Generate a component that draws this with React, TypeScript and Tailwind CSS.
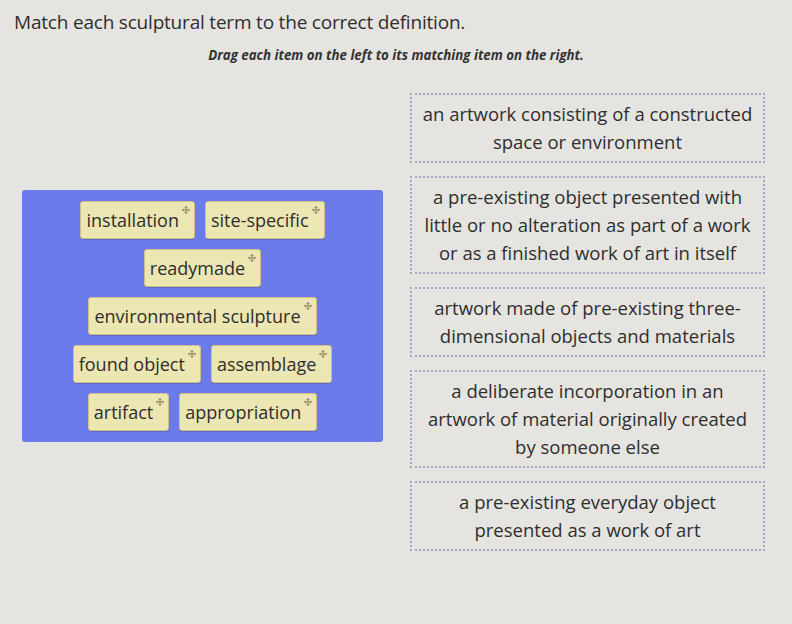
import { Move } from "lucide-react";

const terms: string[][] = [
  ["installation", "site-specific"],
  ["readymade"],
  ["environmental sculpture"],
  ["found object", "assemblage"],
  ["artifact", "appropriation"],
];

const definitions: string[][] = [
  ["an artwork consisting of a constructed", "space or environment"],
  [
    "a pre-existing object presented with",
    "little or no alteration as part of a work",
    "or as a finished work of art in itself",
  ],
  ["artwork made of pre-existing three-", "dimensional objects and materials"],
  [
    "a deliberate incorporation in an",
    "artwork of material originally created",
    "by someone else",
  ],
  ["a pre-existing everyday object", "presented as a work of art"],
];

function Chip({ label }: { label: string }) {
  return (
    <div className="flex items-start h-[38px] pl-[5px] pr-[4px] bg-[#ece6b2] border border-[#d2bd85] rounded-[3px] shadow-[0_1px_1px_rgba(0,0,0,0.15)]">
      <span className="self-center text-[18px] leading-none text-[#2e2e2e]">{label}</span>
      <Move size={8} strokeWidth={2.5} className="ml-[3px] mt-[4px] text-[#7f7055]" />
    </div>
  );
}

export default function App() {
  return (
    <div className="w-[792px] h-[624px] bg-[#e5e4e0] font-['Open_Sans',sans-serif] text-[#2e2e2e] overflow-hidden">
      <h1 className="pl-[14px] pt-[10px] text-[19px] leading-[24px] tracking-[-0.2px]">
        Match each sculptural term to the correct definition.
      </h1>
      <p className="mt-[12px] text-center text-[13.3px] leading-[18px] font-bold italic text-[#333]">
        Drag each item on the left to its matching item on the right.
      </p>

      <div className="flex items-start mt-[29px] pl-[22px]">
        <div className="mt-[97px] w-[361px] h-[252px] bg-[#6b7bec] rounded-[3px] flex flex-col justify-center gap-[10px]">
          {terms.map((row, i) => (
            <div key={i} className="flex justify-center gap-[10px]">
              {row.map((t) => (
                <Chip key={t} label={t} />
              ))}
            </div>
          ))}
        </div>

        <div className="ml-[27px] w-[355px] flex flex-col gap-[13px]">
          {definitions.map((lines, i) => (
            <div
              key={i}
              className="border-2 border-dotted border-[#a3a5c9] py-[5px] text-center text-[18.5px] leading-[28px] text-[#2e2e2e]"
            >
              {lines.map((l) => (
                <div key={l}>{l}</div>
              ))}
            </div>
          ))}
        </div>
      </div>
    </div>
  );
}
